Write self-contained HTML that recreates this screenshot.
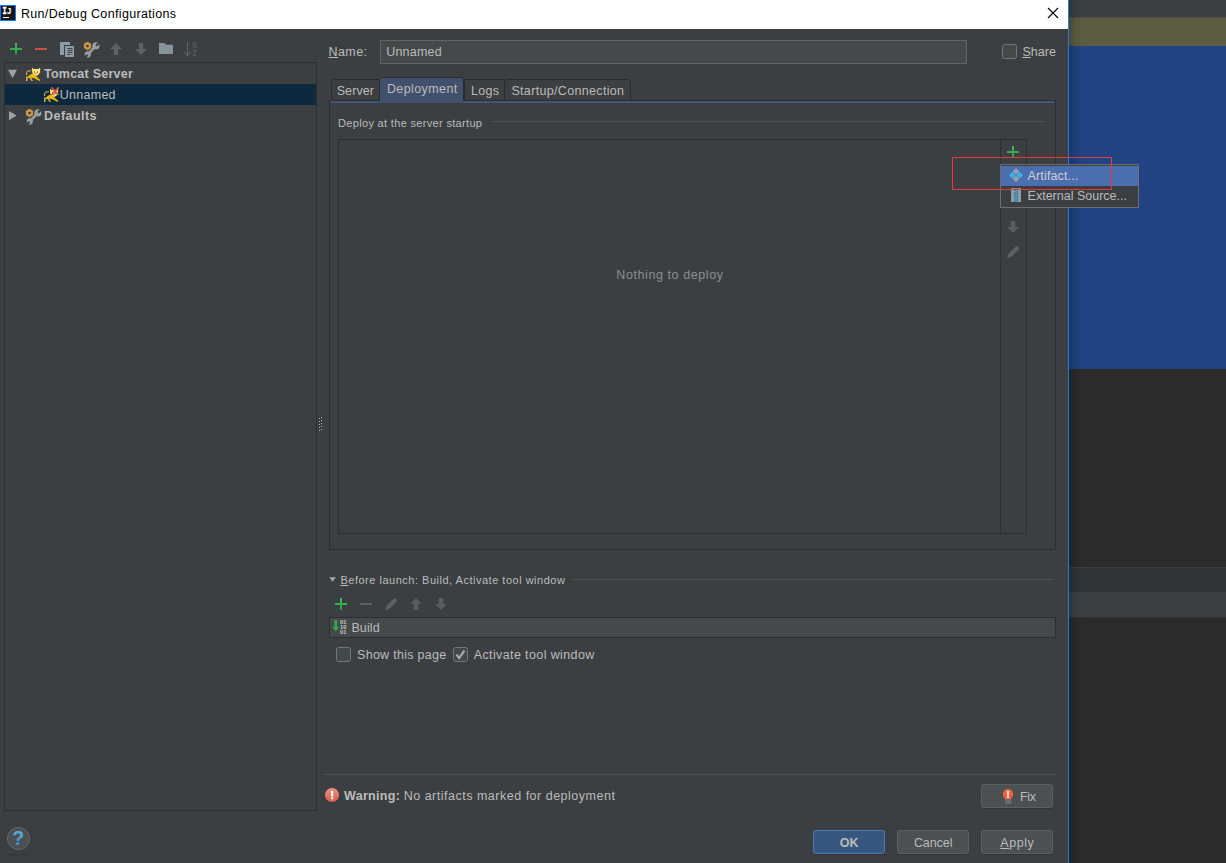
<!DOCTYPE html>
<html lang="en"><head><meta charset="utf-8"><title>Run/Debug Configurations</title>
<style>
*{box-sizing:border-box;margin:0;padding:0}
html,body{width:1226px;height:863px;overflow:hidden;background:#2b2b2b}
body{position:relative;font-family:"Liberation Sans",sans-serif;font-size:12.5px;color:#bbb}
.a{position:absolute}
.t{position:absolute;white-space:pre;height:20px;line-height:20px;font-family:"Liberation Sans",sans-serif}
.t u{text-decoration:underline;text-underline-offset:1px;text-decoration-thickness:1px}
svg{position:absolute;overflow:visible}
/* background IDE behind dialog */
#bg{left:1068px;top:0;width:158px;height:863px;background:#2b2b2b}
#bg .s1{left:0;top:0;width:158px;height:17px;background:#3c3f41}
#bg .s2{left:0;top:17px;width:158px;height:29px;background:#5c5c42;border-top:1px solid #4f5144}
#bg .s3{left:0;top:46px;width:158px;height:323px;background:#214283}
#bg .s4{left:0;top:567px;width:158px;height:1px;background:#3a3c3e}
#bg .s5{left:0;top:568px;width:158px;height:24px;background:#313335}
#bg .s6{left:0;top:592px;width:158px;height:25px;background:#3c3f41}
#bg .s7{left:0;top:617px;width:158px;height:1px;background:#323232}
#bg .sh{left:1px;top:0;width:14px;height:863px;background:linear-gradient(90deg,rgba(0,0,0,.22),rgba(0,0,0,.08) 40%,rgba(0,0,0,0))}
/* dialog */
#dlg{left:0;top:0;width:1068px;height:863px;background:#3c3f41}
#edge{left:1068px;top:0;width:1px;height:863px;background:#1883d7}
#titlebar{left:0;top:0;width:1068px;height:29px;background:#fff}
.box{border:1px solid #2c2e2f}
#tree{left:4px;top:62px;width:313px;height:749px}
.sel{left:5px;top:84px;width:311px;height:21px;background:#0d293e}
#namefield{left:380px;top:40px;width:587px;height:24px;background:#45494a;border:1px solid #646464}
.cb{width:15px;height:15px;border:1px solid #747677;border-radius:2.5px;background:#43494a}
#tabpanel{left:329px;top:100px;width:727px;height:450px;border:1px solid #2c2e2f}
.hl{height:1px;background:#515151}
.btn{height:24px;border:1px solid #5e6060;background:#4c5052;border-radius:2.5px;box-shadow:0 1px 0 rgba(0,0,0,.2)}
#ok{background:#365880;border-color:#4b7aab}
#popup{left:1000px;top:164px;width:139px;height:44px;border:1px solid #6e6e6e;background:#3c3f41}
#popsel{left:1001px;top:166px;width:137px;height:20px;background:#4b6eaf}
#redrect{left:952px;top:157px;width:160px;height:33px;border:1px solid #e8393d}

</style></head>
<body>
<div id="bg" class="a"><div class="a s1"></div><div class="a s2"></div><div class="a s3"></div><div class="a s4"></div><div class="a s5"></div><div class="a s6"></div><div class="a s7"></div><div class="a sh"></div></div>
<div id="dlg" class="a"></div>
<div id="edge" class="a"></div>
<div id="titlebar" class="a"></div>
<!-- left tree -->
<div id="tree" class="a box"></div>
<div class="a sel"></div>
<!-- name row -->
<div id="namefield" class="a"></div>
<div class="a cb" style="left:1002px;top:44px"></div>
<!-- tabs -->
<div id="tabpanel" class="a"></div>
<svg class="a" id="tabs" style="left:0;top:0" width="1226" height="863" viewBox="0 0 1226 863">
<rect x="330" y="101" width="724.4" height="2" fill="#43547a"/>
<path d="M380 103 V79.5 L382 77.5 H462 L463.5 79.5 V103 Z" fill="#41516d"/>
<g fill="none" stroke="#2b2b2b" stroke-width="1">
<path d="M331.5 100 V81.5 L333.5 79.5 H379.5 V100.5"/>
<path d="M379.5 79.5 L381.5 77.5 H462 L463.5 79.5 V100.5"/>
<path d="M464.5 100.5 V79.5 H503 L504.5 81 V100.5"/>
<path d="M504.5 81 L506 79.5 H628.5 L630.5 81.5 V100.5"/>
</g>
</svg>
<div class="a hl" style="left:492px;top:121px;width:553px"></div>
<!-- deployment list box -->
<div class="a box" style="left:338px;top:139px;width:689px;height:395px"></div>
<div class="a" style="left:1000px;top:140px;width:1px;height:393px;background:#2f3133"></div>
<!-- before launch -->
<div class="a hl" style="left:572px;top:579px;width:481px"></div>
<div class="a box" style="left:329px;top:617px;width:727px;height:21px;background:#45494a"></div>
<div class="a cb" style="left:336px;top:647px"></div>
<div class="a cb" style="left:453px;top:647px"></div>
<!-- bottom -->
<div class="a hl" style="left:324px;top:774px;width:732px"></div>
<div class="a btn" style="left:981px;top:784px;width:72px"></div>
<div id="ok" class="a btn" style="left:813px;top:830px;width:72px"></div>
<div class="a btn" style="left:897px;top:830px;width:72px"></div>
<div class="a btn" style="left:981px;top:830px;width:72px"></div>
<!-- popup -->
<div id="popup" class="a"></div>
<div id="popsel" class="a"></div>
<!-- ICONS -->
<svg id="icons" class="a" style="left:0;top:0" width="1226" height="863" viewBox="0 0 1226 863">
<defs>
<linearGradient id="gGreen" x1="0" y1="0" x2="0" y2="1"><stop offset="0" stop-color="#3fb75c"/><stop offset="1" stop-color="#2c9c40"/></linearGradient>
<linearGradient id="gWarn" x1="0" y1="0" x2="0" y2="1"><stop offset="0" stop-color="#ea9388"/><stop offset="1" stop-color="#de5c4d"/></linearGradient>
<linearGradient id="gBulb" x1="0" y1="0" x2="0" y2="1"><stop offset="0" stop-color="#e9742e"/><stop offset="1" stop-color="#f4513f"/></linearGradient>
<linearGradient id="gQ" x1="0" y1="0" x2="0" y2="1"><stop offset="0" stop-color="#62b6e4"/><stop offset="1" stop-color="#3688c4"/></linearGradient>
<g id="plus"><rect x="5" y="0" width="2" height="12" fill="url(#gGreen)"/><rect x="0" y="5" width="12" height="2" fill="#37aa4c"/></g>
<path id="arrUp" d="M6 0 L12 6 L8.2 6 L8.2 12 L3.8 12 L3.8 6 L0 6 Z"/>
<path id="arrDn" d="M6 12 L12 6 L8.2 6 L8.2 0 L3.8 0 L3.8 6 L0 6 Z"/>
<path id="pencil" d="M0 12.2 L1.6 7.6 L8.4 0.9 Q9.9 -0.3 11.3 1.1 Q12.6 2.5 11.4 3.9 L4.6 10.6 Z"/>
<g id="wrench">
 <path d="M3.8 12.4 L11.8 3.8" stroke="#9b9ea0" stroke-width="2.7" fill="none"/>
 <circle cx="11.9" cy="3.9" r="3.55" fill="#9b9ea0"/>
 <path d="M12.1 3.7 L15.8 0" stroke="#3c3f41" stroke-width="2.3" fill="none"/>
 <circle cx="3.8" cy="12.4" r="3.1" fill="#9b9ea0"/>
 <path d="M3.5 12.7 L0.4 16" stroke="#3c3f41" stroke-width="2.2" fill="none"/>
 <path d="M3.5 -0.3 L7.1 1.8 L7.1 6.1 L3.5 8.2 L-0.1 6.1 L-0.1 1.8 Z" fill="#cf9645"/>
 <circle cx="3.5" cy="4" r="1.25" fill="#33363a"/>
</g>
<g id="cat">
 <path d="M4.9 2.7 L2.2 3 Q0.6 3.3 0.6 4.8 V7" stroke="#e6c24a" stroke-width="1" fill="none"/>
 <path d="M0.2 8.6 L1.7 8.4 L1.4 13 L0.1 13 Z" fill="#e6c24a"/>
 <path d="M3.2 9.7 L5 9.5 L7 12.9 L5.6 12.9 Z" fill="#cdb96f"/>
 <path d="M1.7 8.7 Q3.4 6.8 6.4 5.4 L10.2 8.2 L14.2 12.1 L13.6 13 L9.8 10.9 Q7 9.5 4.6 9.7 L1.6 9.9 Z" fill="#f0b70f"/>
 <path d="M5.9 -0.2 L7.7 1 L12.3 1 L14.2 -0.2 L14.1 4 Q13.4 6.2 11.4 7.4 L10 8 Q7.4 7 6.3 4.8 Z" fill="#fbe57c"/>
 <rect x="8.1" y="3.4" width=".9" height="1.4" fill="#5c4c14"/><rect x="11" y="3.4" width=".9" height="1.4" fill="#5c4c14"/>
 <rect x="9.5" y="5.2" width="1.1" height=".9" fill="#5c4c14"/>
</g>
</defs>
<!-- title bar -->
<rect x="0" y="5" width="16" height="16" fill="#0a7cff"/>
<rect x="1" y="6" width="14" height="14" fill="#151515"/>
<text x="2.6" y="13.9" font-family="Liberation Mono, monospace" font-weight="700" font-size="10" fill="#fff" stroke="#fff" stroke-width=".35" textLength="4.2" lengthAdjust="spacingAndGlyphs">I</text><text x="7" y="13.9" font-family="Liberation Sans, sans-serif" font-weight="700" font-size="9" fill="#fff" stroke="#fff" stroke-width=".2" textLength="4.2" lengthAdjust="spacingAndGlyphs">J</text>
<rect x="3" y="17" width="6" height="1" fill="#fff"/>
<path d="M1048 8 L1058 18 M1058 8 L1048 18" stroke="#000" stroke-width="1.1" fill="none"/>
<!-- left toolbar -->
<use href="#plus" x="10" y="43"/>
<rect x="35" y="48" width="12" height="2" fill="#cf5248"/>
<rect x="60" y="42" width="10" height="13" fill="#8d9ba5"/>
<rect x="64.5" y="45.5" width="10" height="12" fill="#8d9ba5" stroke="#3c3f41" stroke-width="1"/>
<path d="M67.5 48.5h5M67.5 50.5h5M67.5 52.5h5M67.5 54.5h3" stroke="#3c3f41" stroke-width="1"/>
<use href="#wrench" x="84" y="42"/>
<use href="#arrUp" x="110" y="43" fill="#5e6061"/>
<use href="#arrDn" x="135" y="43" fill="#5e6061"/>
<path d="M159 43 L164.4 43 L166.4 44.8 L173 44.8 L173 54 L159 54 Z" fill="#87939a"/>
<path d="M187.5 42 V55.6 M184.2 51.8 L187.5 55.6 L190.8 51.8" stroke="#5e6061" stroke-width="1.15" fill="none"/>
<text x="192" y="48" font-family="Liberation Sans, sans-serif" font-size="11" fill="#5e6061" textLength="5" lengthAdjust="spacingAndGlyphs">a</text>
<text x="192.2" y="55.8" font-family="Liberation Sans, sans-serif" font-size="11" fill="#5e6061" textLength="4.8" lengthAdjust="spacingAndGlyphs">z</text>
<!-- tree -->
<path d="M8 69.8 L17 69.8 L12.5 78 Z" fill="#9fa1a2"/>
<path d="M9 111 L16.6 115.6 L9 120.2 Z" fill="#9fa1a2"/>
<use href="#cat" x="26" y="68"/>
<use href="#cat" x="44" y="89"/>
<path d="M51.5 87.4 L58.7 95 M58.7 87.4 L51.5 95" stroke="#d8524a" stroke-width="1.8" fill="none"/>
<use href="#wrench" x="26" y="109"/>
<!-- splitter dots -->
<g fill="#222425"><rect x="318.6" y="417.6" width="1" height="1"/><rect x="318.6" y="420.6" width="1" height="1"/><rect x="318.6" y="423.6" width="1" height="1"/><rect x="318.6" y="426.6" width="1" height="1"/><rect x="318.6" y="429.6" width="1" height="1"/><rect x="320.6" y="416.6" width="1" height="1"/><rect x="320.6" y="419.6" width="1" height="1"/><rect x="320.6" y="422.6" width="1" height="1"/><rect x="320.6" y="425.6" width="1" height="1"/><rect x="320.6" y="428.6" width="1" height="1"/></g>
<g fill="#b8b8b8"><rect x="319" y="418" width="1" height="1"/><rect x="319" y="421" width="1" height="1"/><rect x="319" y="424" width="1" height="1"/><rect x="319" y="427" width="1" height="1"/><rect x="319" y="430" width="1" height="1"/><rect x="321" y="417" width="1" height="1"/><rect x="321" y="420" width="1" height="1"/><rect x="321" y="423" width="1" height="1"/><rect x="321" y="426" width="1" height="1"/><rect x="321" y="429" width="1" height="1"/></g>
<!-- deployment side toolbar -->
<use href="#plus" x="1007" y="146"/>
<use href="#arrDn" x="1007" y="221" fill="#5a5c5d"/>
<use href="#pencil" x="1007" y="246" fill="#5e6061"/>
<!-- before launch -->
<path d="M329.2 577.2 L336 577.2 L332.6 581.8 Z" fill="#a2a4a5"/>
<use href="#plus" x="335" y="598"/>
<rect x="360" y="603" width="12" height="2" fill="#5f6162"/>
<use href="#pencil" x="385" y="598" fill="#5e6061"/>
<use href="#arrUp" x="410" y="598" fill="#5a5c5d"/>
<use href="#arrDn" x="435" y="598" fill="#5a5c5d"/>
<path d="M334.4 620 H337.2 V627 H339.4 L335.8 631.2 L332.2 627 H334.4 Z" fill="#36a84b"/>
<g font-family="Liberation Sans, sans-serif" font-weight="700" font-size="5.8" fill="#c8c8c8"><text x="340" y="624">01</text><text x="340" y="629.1">10</text><text x="340" y="634.2">01</text></g>
<!-- checkmark -->
<path d="M456.4 654.6 L459.2 658 L464.4 650.6" stroke="#adadad" stroke-width="2.1" fill="none"/>
<!-- warning -->
<circle cx="332" cy="795" r="7.1" fill="url(#gWarn)"/>
<rect x="331" y="791" width="2.2" height="5.6" fill="#fff"/><rect x="331" y="797.4" width="2.2" height="1.8" fill="#fff"/>
<!-- bulb -->
<path d="M1008 789 A5.2 5.2 0 0 1 1013.2 794.2 Q1013.2 796.6 1011.2 799 L1004.9 799 Q1002.9 796.6 1002.9 794.2 A5.2 5.2 0 0 1 1008 789 Z" fill="url(#gBulb)"/>
<rect x="1007.1" y="791" width="1.8" height="5.4" fill="#fff" opacity=".92"/><rect x="1006.8" y="797" width="2.4" height="1" fill="#fff" opacity=".92"/>
<rect x="1005" y="799.2" width="6.2" height="4.6" fill="#787c7e"/>
<path d="M1005 800.8h6.2M1005 802.4h6.2" stroke="#54585a" stroke-width=".7"/>
<!-- help -->
<rect x="7.4" y="854.2" width="21.2" height="1.4" fill="#353739"/>
<circle cx="18.5" cy="838.5" r="11" fill="#4c5052" stroke="#666a6b" stroke-width="1"/>
<text x="18.2" y="845.4" text-anchor="middle" font-family="Liberation Sans, sans-serif" font-weight="700" font-size="19.5" fill="url(#gQ)">?</text>
<!-- popup icons -->
<g>
<path d="M1016 168 L1019.4 171.4 L1016 174.8 L1012.6 171.4 Z" fill="#8fa2ba"/>
<path d="M1016 175.4 L1019.4 178.8 L1016 182.2 L1012.6 178.8 Z" fill="#8fa2ba"/>
<path d="M1012.3 171.7 L1015.7 175.1 L1012.3 178.5 L1008.9 175.1 Z" fill="#40b0e4"/>
<path d="M1019.7 171.7 L1023.1 175.1 L1019.7 178.5 L1016.3 175.1 Z" fill="#40b0e4"/>
</g>
<rect x="1011" y="188" width="10" height="14" fill="#8d9ba5"/>
<rect x="1014.5" y="188" width="3.2" height="14" fill="#4a5a66"/>
<path d="M1014.5 188.7h2.2M1015.5 190.1h2.2M1014.5 191.5h2.2M1015.5 192.9h2.2M1014.5 194.3h2.2M1015.5 195.7h2.2M1014.5 197.1h2.2M1015.5 198.5h2.2M1014.5 199.9h2.2M1015.5 201.3h2.2" stroke="#3db4e6" stroke-width="1.1"/>
</svg>
<!-- /ICONS -->
<div id="redrect" class="a"></div>

<div id="texts">
<span class="t" id="t_title" style="left:20.90px;top:3.97px;font-size:12.5px;font-weight:400;color:#000;letter-spacing:0.340px">Run/Debug Configurations</span>
<span class="t" id="t_tomcat" style="left:44.00px;top:63.97px;font-size:12.5px;font-weight:700;color:#bbb;letter-spacing:0.237px">Tomcat Server</span>
<span class="t" id="t_unnamed" style="left:59.80px;top:84.97px;font-size:12.5px;font-weight:400;color:#bbb;letter-spacing:0.257px">Unnamed</span>
<span class="t" id="t_defaults" style="left:44.00px;top:105.97px;font-size:12.5px;font-weight:700;color:#bbb;letter-spacing:0.459px">Defaults</span>
<span class="t" id="t_name" style="left:328.60px;top:41.97px;font-size:12.5px;font-weight:400;color:#bbb;letter-spacing:0.394px"><u>N</u>ame:</span>
<span class="t" id="t_nameval" style="left:386.20px;top:41.97px;font-size:12.5px;font-weight:400;color:#bbb;letter-spacing:0.228px">Unnamed</span>
<span class="t" id="t_share" style="left:1022.40px;top:41.97px;font-size:12.5px;font-weight:400;color:#bbb;letter-spacing:0.028px"><u>S</u>hare</span>
<span class="t" id="t_server" style="left:336.70px;top:80.97px;font-size:12.5px;font-weight:400;color:#bbb;letter-spacing:0.079px">Server</span>
<span class="t" id="t_deployment" style="left:386.90px;top:78.97px;font-size:12.5px;font-weight:400;color:#bbb;letter-spacing:0.410px">Deployment</span>
<span class="t" id="t_logs" style="left:470.90px;top:80.97px;font-size:12.5px;font-weight:400;color:#bbb;letter-spacing:0.373px">Logs</span>
<span class="t" id="t_startup" style="left:511.40px;top:80.97px;font-size:12.5px;font-weight:400;color:#bbb;letter-spacing:0.332px">Startup/Connection</span>
<span class="t" id="t_deployat" style="left:338.00px;top:113.49px;font-size:11px;font-weight:400;color:#bbb;letter-spacing:0.328px">Deploy at the server startup</span>
<span class="t" id="t_nothing" style="left:616.30px;top:264.97px;font-size:12.5px;font-weight:400;color:#8b8f91;letter-spacing:0.583px">Nothing to deploy</span>
<span class="t" id="t_before" style="left:340.40px;top:570.49px;font-size:11px;font-weight:400;color:#bbb;letter-spacing:0.509px"><u>B</u>efore launch: Build, Activate tool window</span>
<span class="t" id="t_build" style="left:351.40px;top:617.97px;font-size:12.5px;font-weight:400;color:#bbb;letter-spacing:0.121px">Build</span>
<span class="t" id="t_show" style="left:357.00px;top:644.97px;font-size:12.5px;font-weight:400;color:#bbb;letter-spacing:0.294px">Show this page</span>
<span class="t" id="t_activate" style="left:473.70px;top:644.97px;font-size:12.5px;font-weight:400;color:#bbb;letter-spacing:0.387px">Activate tool window</span>
<span class="t" id="t_warning" style="left:344.00px;top:785.97px;font-size:12.5px;font-weight:700;color:#bbb;letter-spacing:0.300px">Warning:</span>
<span class="t" id="t_noart" style="left:403.70px;top:785.97px;font-size:12.5px;font-weight:400;color:#bbb;letter-spacing:0.505px">No artifacts marked for deployment</span>
<span class="t" id="t_fix" style="left:1020.10px;top:786.97px;font-size:12.5px;font-weight:400;color:#bbb;letter-spacing:-0.391px">Fix</span>
<span class="t" id="t_ok" style="left:839.70px;top:832.97px;font-size:12.5px;font-weight:700;color:#bbb;letter-spacing:0.175px">OK</span>
<span class="t" id="t_cancel" style="left:913.90px;top:832.97px;font-size:12.5px;font-weight:400;color:#bbb;letter-spacing:-0.070px">Cancel</span>
<span class="t" id="t_apply" style="left:1000.30px;top:832.97px;font-size:12.5px;font-weight:400;color:#bbb;letter-spacing:0.564px"><u>A</u>pply</span>
<span class="t" id="t_artifact" style="left:1027.60px;top:165.97px;font-size:12.5px;font-weight:400;color:#d0d0d0;letter-spacing:0.134px">Artifact...</span>
<span class="t" id="t_external" style="left:1027.60px;top:185.97px;font-size:12.5px;font-weight:400;color:#bbb;letter-spacing:0.002px">External Source...</span>
</div>
</body></html>
